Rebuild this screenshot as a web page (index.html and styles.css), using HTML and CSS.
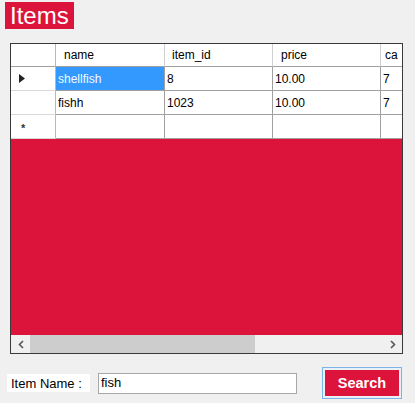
FILE: index.html
```html
<!DOCTYPE html>
<html>
<head>
<meta charset="utf-8">
<link rel="stylesheet" href="styles.css">
</head>
<body>
<div class="title">Items</div>
<div class="grid">
  <div class="row header">
    <div class="cell rh"></div>
    <div class="cell c1 hd">name</div>
    <div class="cell c2 hd">item_id</div>
    <div class="cell c3 hd">price</div>
    <div class="cell c4 hd">ca</div>
  </div>
  <div class="row">
    <div class="cell rh"><svg class="arrow" width="6" height="9" viewBox="0 0 6 9"><path d="M0 0 L6 4.5 L0 9 Z" fill="#222"/></svg></div>
    <div class="cell c1 sel">shellfish</div>
    <div class="cell c2">8</div>
    <div class="cell c3">10.00</div>
    <div class="cell c4">7</div>
  </div>
  <div class="row">
    <div class="cell rh"></div>
    <div class="cell c1">fishh</div>
    <div class="cell c2">1023</div>
    <div class="cell c3">10.00</div>
    <div class="cell c4">7</div>
  </div>
  <div class="row">
    <div class="cell rh star">*</div>
    <div class="cell c1"></div>
    <div class="cell c2"></div>
    <div class="cell c3"></div>
    <div class="cell c4"></div>
  </div>
  <div class="fill"></div>
  <div class="hscroll">
    <div class="sbtn"><svg width="6" height="9" viewBox="0 0 6 9"><path d="M5 1 L1.5 4.5 L5 8" fill="none" stroke="#555" stroke-width="1.6"/></svg></div>
    <div class="thumb"></div>
    <div class="track"></div>
    <div class="sbtn"><svg width="6" height="9" viewBox="0 0 6 9"><path d="M1 1 L4.5 4.5 L1 8" fill="none" stroke="#555" stroke-width="1.6"/></svg></div>
  </div>
</div>
<div class="form">
  <div class="label">Item Name :</div>
  <div class="input">fish</div>
  <div class="btnwrap"><div class="btn">Search</div></div>
</div>
</body>
</html>
```
FILE: styles.css
```css
html, body {
  margin: 0;
  padding: 0;
  background: #f0f0f0;
  font-family: "Liberation Sans", Arial, sans-serif;
}
.title {
  display: inline-block;
  margin: 2px 0 0 5px;
  padding: 0 5px;
  height: 27px;
  line-height: 28px;
  background: #dc143c;
  color: #fff;
  font-size: 24px;
}
.grid {
  margin: 14px 0 0 10px;
  width: 391px;
  border: 1px solid #3a3a3a;
  background: #fff;
  font-size: 12px;
  color: #000;
}
.row {
  display: flex;
  height: 24px;
}
.row.header {
  height: 23px;
}
.cell {
  box-sizing: border-box;
  height: 100%;
  border-right: 1px solid #a0a0a0;
  border-bottom: 1px solid #a0a0a0;
  padding: 0 2px;
  display: flex;
  align-items: center;
  white-space: nowrap;
  overflow: hidden;
}
.rh {
  width: 45px;
  border-right-color: #b8b8b8;
  border-bottom-color: #d8d8d8;
  padding: 0 0 0 8px;
}
.header .rh {
  border-bottom-color: #a0a0a0;
}
.c1 { width: 109px; }
.c2 { width: 108px; }
.c3 { width: 108px; }
.c4 { width: 21px; border-right: none; }
.hd {
  padding-left: 8px;
  border-right-color: #d0d0d0;
}
.c2.hd { padding-left: 7px; }
.c4.hd { padding-left: 4px; }
.sel {
  background: #3399ff;
  color: #f4f9ff;
}
.star {
  font-size: 11px;
  font-weight: bold;
  padding-left: 10px;
  padding-top: 3px;
  color: #333;
}
.fill {
  height: 196px;
  background: #dc143c;
}
.hscroll {
  display: flex;
  height: 18px;
  background: #f0f0f0;
}
.sbtn {
  width: 19px;
  display: flex;
  align-items: center;
  justify-content: center;
}
.thumb {
  width: 225px;
  background: #cdcdcd;
}
.track {
  flex: 1;
}
.form {
  display: flex;
  align-items: center;
  margin-top: 13px;
  height: 32px;
  font-size: 13px;
}
.label {
  margin-left: 7px;
  width: 83px;
  height: 18px;
  line-height: 19px;
  background: #fff;
  box-sizing: border-box;
  padding-left: 4px;
}
.input {
  margin-left: 8px;
  box-sizing: border-box;
  width: 199px;
  height: 21px;
  border: 1px solid #a8a8a8;
  background: #fff;
  padding-left: 2px;
  line-height: 18px;
}
.btnwrap {
  margin-left: 25px;
  box-sizing: border-box;
  width: 80px;
  height: 32px;
  border: 1px solid #7fb3e6;
  padding: 2px;
  background: #e8f0f8;
}
.btn {
  height: 100%;
  background: #dc143c;
  color: #fff;
  font-weight: bold;
  font-size: 14.5px;
  display: flex;
  align-items: center;
  justify-content: center;
}
```
